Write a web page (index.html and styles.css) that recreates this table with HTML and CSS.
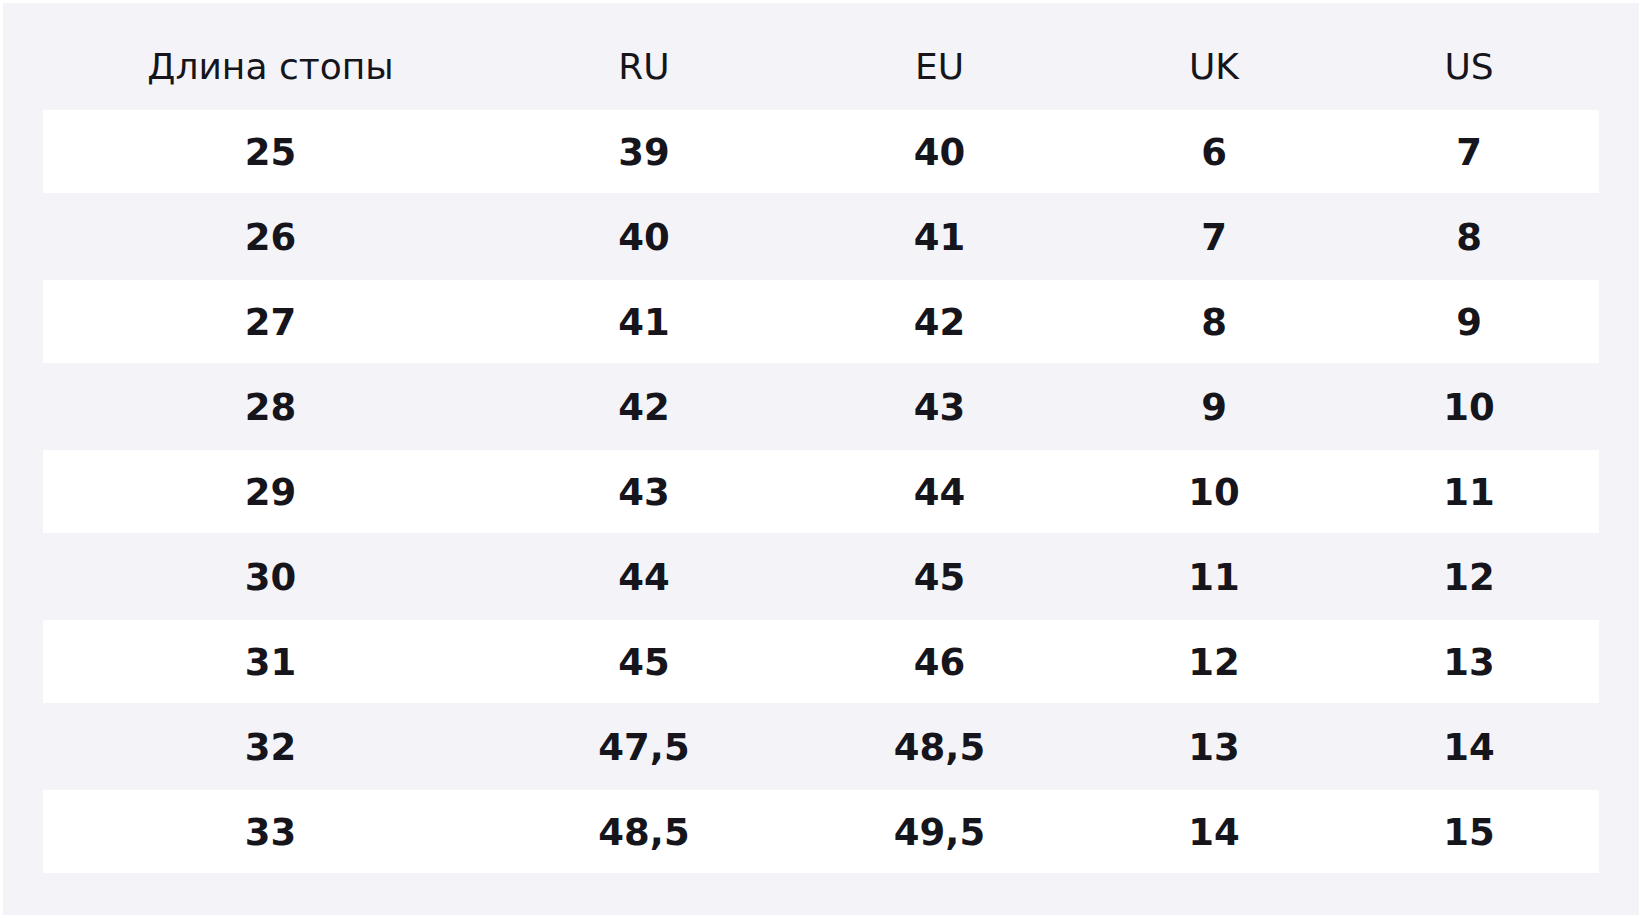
FILE: index.html
```html
<!DOCTYPE html>
<html lang="ru">
<head>
<meta charset="utf-8">
<title>Таблица размеров</title>
<link rel="stylesheet" href="styles.css">
</head>
<body>
<div class="card">
  <div class="grid">
    <div class="row head">
      <div class="cell">Длина стопы</div><div class="cell">RU</div><div class="cell">EU</div><div class="cell">UK</div><div class="cell">US</div>
    </div>
    <div class="row odd"><div class="cell">25</div><div class="cell">39</div><div class="cell">40</div><div class="cell">6</div><div class="cell">7</div></div>
    <div class="row even"><div class="cell">26</div><div class="cell">40</div><div class="cell">41</div><div class="cell">7</div><div class="cell">8</div></div>
    <div class="row odd"><div class="cell">27</div><div class="cell">41</div><div class="cell">42</div><div class="cell">8</div><div class="cell">9</div></div>
    <div class="row even"><div class="cell">28</div><div class="cell">42</div><div class="cell">43</div><div class="cell">9</div><div class="cell">10</div></div>
    <div class="row odd"><div class="cell">29</div><div class="cell">43</div><div class="cell">44</div><div class="cell">10</div><div class="cell">11</div></div>
    <div class="row even"><div class="cell">30</div><div class="cell">44</div><div class="cell">45</div><div class="cell">11</div><div class="cell">12</div></div>
    <div class="row odd"><div class="cell">31</div><div class="cell">45</div><div class="cell">46</div><div class="cell">12</div><div class="cell">13</div></div>
    <div class="row even"><div class="cell">32</div><div class="cell">47,5</div><div class="cell">48,5</div><div class="cell">13</div><div class="cell">14</div></div>
    <div class="row odd"><div class="cell">33</div><div class="cell">48,5</div><div class="cell">49,5</div><div class="cell">14</div><div class="cell">15</div></div>
  </div>
</div>
</body>
</html>
```
FILE: styles.css
```css
html, body {
  background: #ffffff;
}
body {
  margin: 3px;
  font-family: "DejaVu Sans", sans-serif;
  color: #15151b;
}
.card {
  width: 1636px;
  height: 912px;
  box-sizing: border-box;
  background: #f4f4f8;
  padding: 43px 40px 42px;
}
.grid {
  display: flex;
  flex-direction: column;
}
.row {
  display: grid;
  grid-template-columns: 455px 292px 299px 250px 260px;
  align-items: center;
  box-sizing: border-box;
}
.cell {
  text-align: center;
  white-space: nowrap;
}
.head {
  font-size: 36px;
  font-weight: 400;
  line-height: 42px;
  height: 42px;
  margin-bottom: 22px;
}
.odd, .even {
  font-size: 37px;
  font-weight: 700;
  line-height: 42px;
  padding-top: 2px;
}
.odd {
  height: 83px;
  background: #ffffff;
}
.even {
  height: 87px;
}
```
